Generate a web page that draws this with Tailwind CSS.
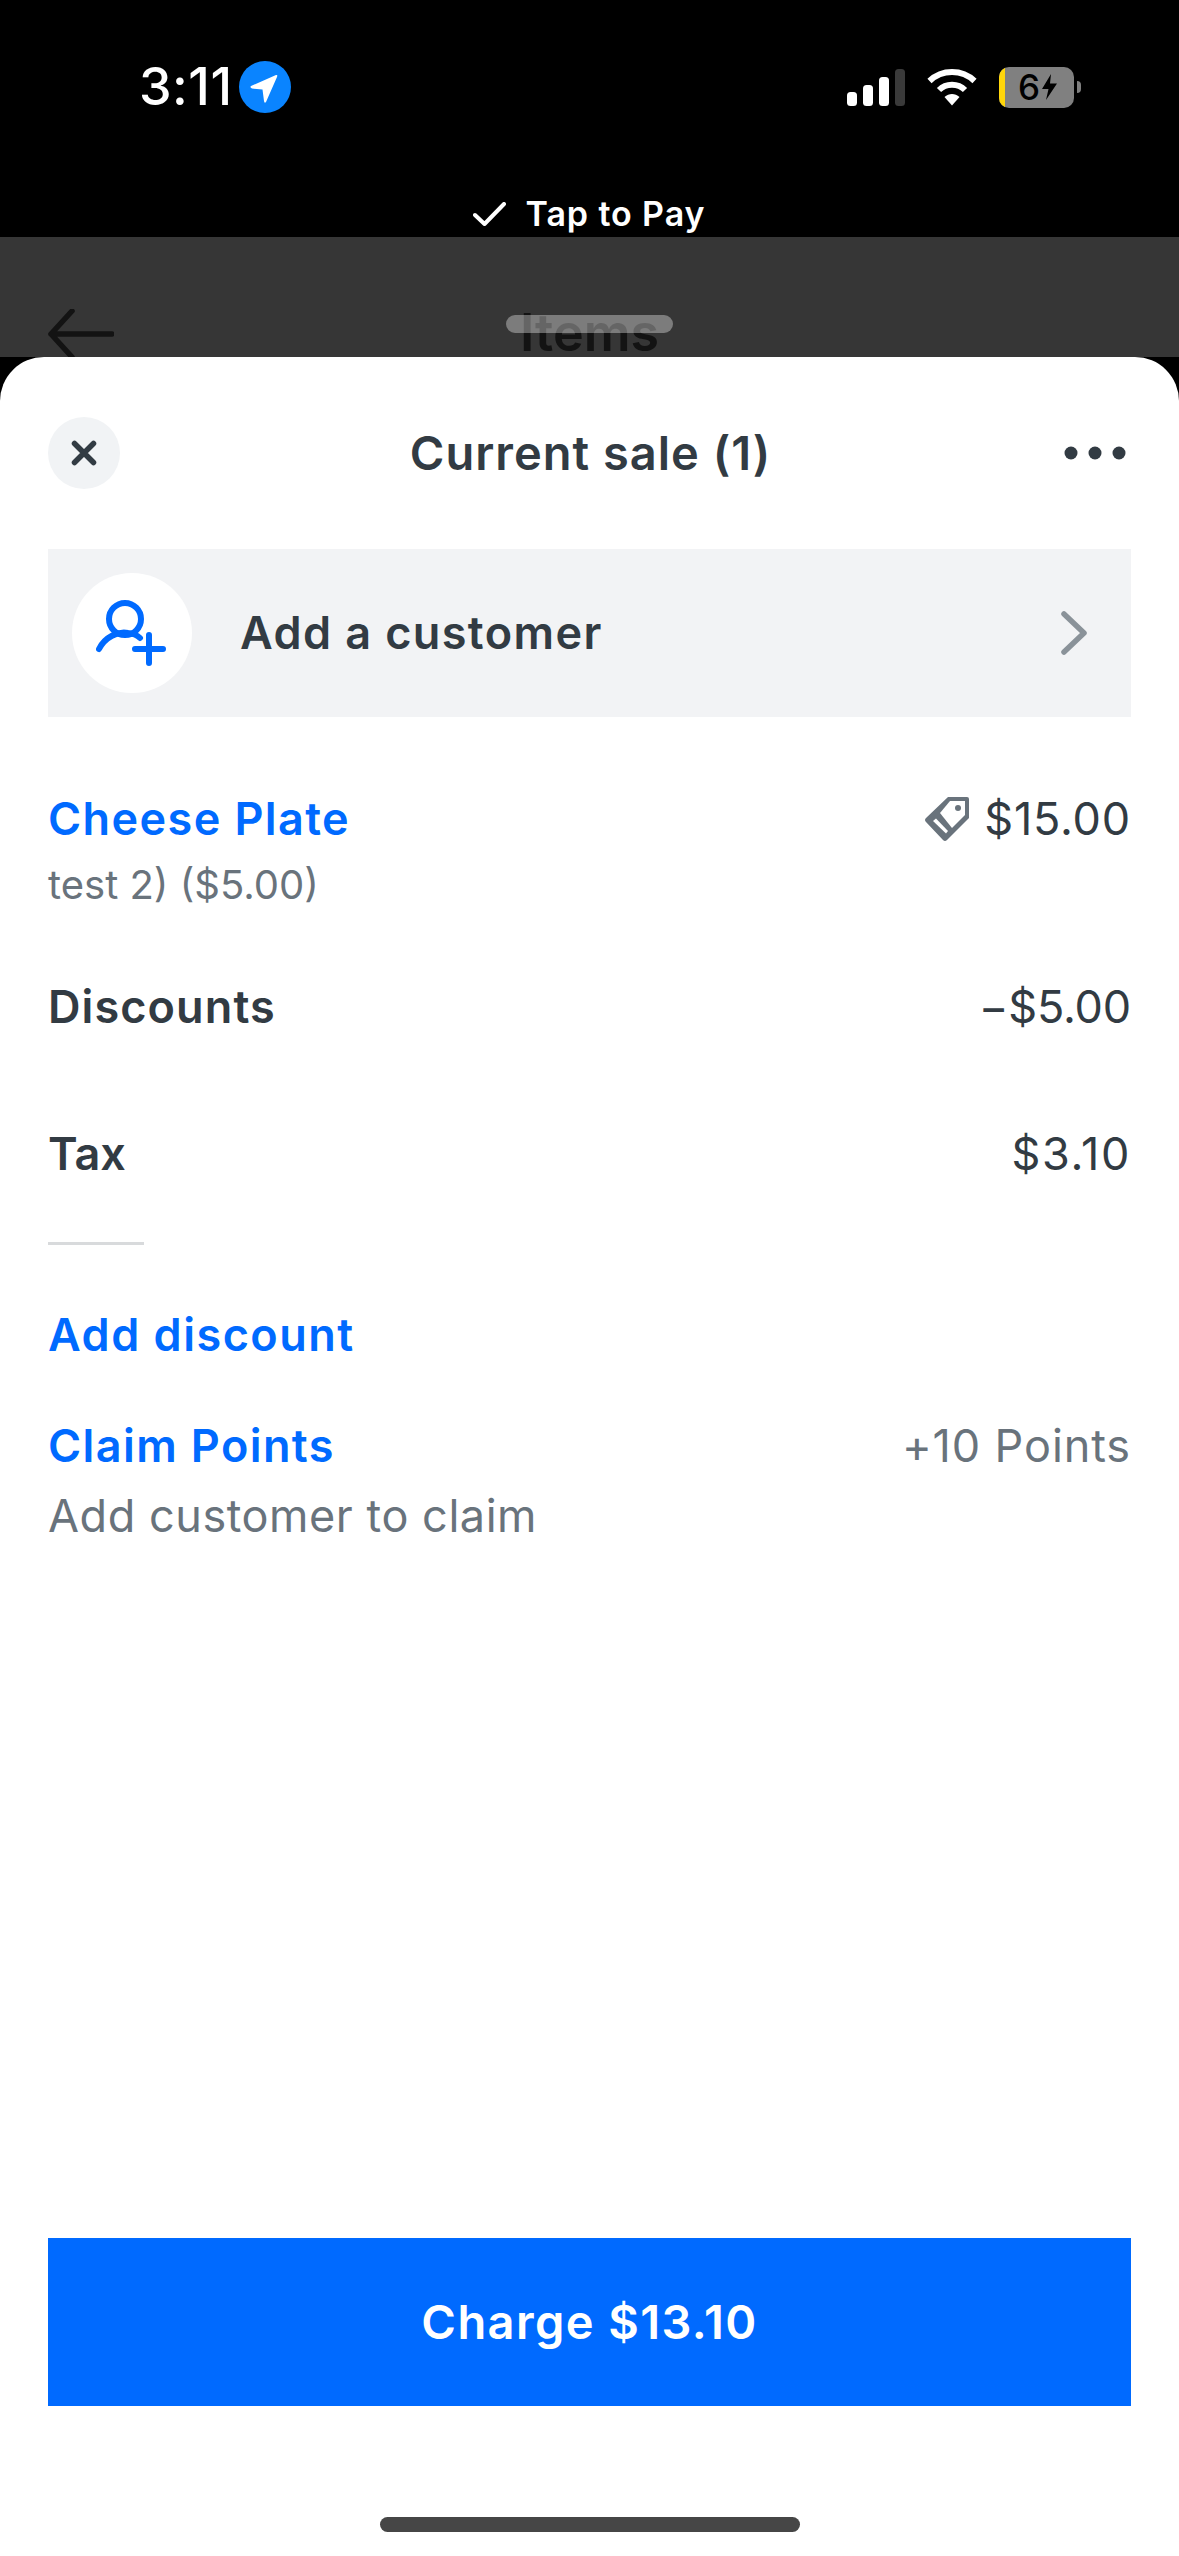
<!DOCTYPE html>
<html>
<head>
<meta charset="utf-8">
<script src="https://cdn.jsdelivr.net/npm/@tailwindcss/browser@4"></script>
</head>
<body class="m-0 bg-black">
<div class="relative w-[1179px] h-[2556px] overflow-hidden bg-black flex flex-col font-['Inter','Liberation_Sans',sans-serif]">
  <!-- status bar -->
  <div class="h-[237px] shrink-0 bg-black relative">
    <div class="flex items-center justify-between pl-[139px] pr-[98px] pt-[62px] h-[112px]">
      <div class="flex items-center gap-[6px]">
        <span class="text-white text-[52px] leading-[50px] font-medium tracking-[0.5px]">3:11</span>
        <svg width="52" height="52" viewBox="0 0 52 52"><circle cx="26" cy="26" r="26" fill="#0a84ff"/><path d="M12 25 L37 14 Q39 13.500 38 16 L27 41 Q25.500 43 25 40 L23.500 28.500 L13 27.500 Q10.500 26.500 12 25Z" fill="#fff"/></svg>
      </div>
      <div class="flex items-center gap-[22px]">
        <svg width="58" height="37" viewBox="0 0 58 37"><rect x="0" y="23" width="10" height="14" rx="3.500" fill="#fff"/><rect x="16" y="16" width="10" height="21" rx="3.500" fill="#fff"/><rect x="32" y="8" width="10" height="29" rx="3.500" fill="#fff"/><rect x="48" y="0" width="10" height="37" rx="3.500" fill="#3a3a3a"/></svg>
        <svg width="50" height="37" viewBox="0 0 50 37"><path d="M2.500 12 C15 0 35 0 47.500 12" fill="none" stroke="#fff" stroke-width="6"/><path d="M12 21 C19 14 31 14 38 21" fill="none" stroke="#fff" stroke-width="6"/><path d="M17.500 28 C22 24 28 24 32.500 28 L25 36.500 Z" fill="#fff"/></svg>
        <div class="flex items-center gap-[3px]">
          <div class="relative w-[75px] h-[41px] rounded-[10px] bg-[#808080] overflow-hidden flex items-center justify-center gap-[1px]">
            <div class="absolute left-0 top-0 bottom-0 w-[6px] bg-[#ffd60a]"></div>
            <span class="text-black text-[35px] leading-[33px] font-medium ml-[3px]">6</span>
            <svg width="17" height="26" viewBox="0 0 17 26"><path d="M10 0 L1 15 L7.500 15 L5 26 L16 9.500 L9 9.500 Z" fill="#000"/></svg>
          </div>
          <div class="w-[4px] h-[12px] rounded-r-[4px] bg-[#808080]"></div>
        </div>
      </div>
    </div>
    <div class="absolute left-0 right-0 top-[196px] flex items-center justify-center gap-[20px] pr-[1px]">
      <svg width="33" height="24" viewBox="0 0 33 24"><path d="M2 13 L11.500 22 L31 2" fill="none" stroke="#fff" stroke-width="4" stroke-linecap="round" stroke-linejoin="round"/></svg>
      <span class="text-white text-[34px] leading-[36px] font-semibold tracking-[0.9px]">Tap to Pay</span>
    </div>
  </div>
  <!-- dimmed nav -->
  <div class="h-[120px] shrink-0 bg-[#363636] relative">
    <svg class="absolute left-[48px] top-[72px]" width="66" height="49" viewBox="0 0 66 49"><path d="M64 25 L3 25 L24 2 M3 25 L24 48" fill="none" stroke="#131313" stroke-width="5.500" stroke-linecap="round" stroke-linejoin="round"/></svg>
    <div class="absolute left-0 right-0 top-[66px] text-center text-[#131313] text-[52px] leading-[60px] font-semibold">Items</div>
    <div class="absolute left-[506px] top-[78px] w-[167px] h-[18px] rounded-full bg-white/35"></div>
  </div>
  <!-- sheet -->
  <div class="relative flex-1 bg-white rounded-t-[44px] px-[48px] flex flex-col text-[#323b43]">
    <div class="flex items-center justify-between h-[72px] mt-[60px]">
      <div class="w-[72px] h-[72px] rounded-full bg-[#f1f3f5] flex items-center justify-center">
        <svg width="26" height="26" viewBox="0 0 26 26"><path d="M3.500 3.500 L22.500 22.500 M22.500 3.500 L3.500 22.500" fill="none" stroke="#323b43" stroke-width="5.500" stroke-linecap="round"/></svg>
      </div>
      <div class="mr-[3px] text-[47px] leading-[56px] font-semibold tracking-[1px]">Current sale (1)</div>
      <svg class="mr-[5px]" width="62" height="14" viewBox="0 0 62 14"><circle cx="7" cy="7" r="6.500" fill="#323b43"/><circle cx="31" cy="7" r="6.500" fill="#323b43"/><circle cx="55" cy="7" r="6.500" fill="#323b43"/></svg>
    </div>
    <div class="mt-[60px] h-[168px] w-[1083px] bg-[#f2f3f5] flex items-center pl-[24px] pr-[44px]">
      <div class="w-[120px] h-[120px] rounded-full bg-white flex items-center justify-center">
        <svg width="72" height="68" viewBox="0 0 72 68"><circle cx="29" cy="20" r="16" fill="none" stroke="#006aff" stroke-width="6"/><path d="M3 50 C9 38 22 32 32 34 C37 34.500 41 36 44 39" fill="none" stroke="#006aff" stroke-width="6" stroke-linecap="round"/><path d="M53 36 L53 64 M39 50 L67 50" fill="none" stroke="#006aff" stroke-width="6" stroke-linecap="round"/></svg>
      </div>
      <div class="ml-[48px] flex-1 text-[45px] leading-[56px] font-semibold tracking-[1.4px]">Add a customer</div>
      <svg width="26" height="44" viewBox="0 0 26 44"><path d="M3 3 L23 22 L3 41" fill="none" stroke="#8a9299" stroke-width="5.500" stroke-linecap="round" stroke-linejoin="round"/></svg>
    </div>
    <div class="mt-[74px] flex items-center justify-between">
      <div class="text-[#006aff] text-[45px] leading-[56px] font-semibold tracking-[1.4px]">Cheese Plate</div>
      <div class="flex items-center gap-[14px]">
        <svg width="45" height="46" viewBox="0 0 45 46"><path d="M23 1 L42 1 Q44 1 44 3 L44 22 L22 44 Q20 46 18 44 L1 26 Q-1 24 1 22 Z" fill="#69737c"/><path d="M25 5 L40 5 L40 19 L27 32 L15 17 Z" fill="#fff"/><circle cx="33" cy="12" r="3" fill="#69737c"/><path d="M8 25 L11 22.500 L23 35 L21 37.500 Z" fill="#fff"/></svg>
        <span class="text-[45px] leading-[56px] tracking-[0.8px]">$15.00</span>
      </div>
    </div>
    <div class="mt-[13px] text-[#69737c] text-[40px] leading-[50px]">test 2) ($5.00)</div>
    <div class="mt-[69px] flex items-center justify-between">
      <div class="text-[45px] leading-[56px] font-semibold tracking-[1.1px]">Discounts</div>
      <div class="text-[45px] leading-[56px] tracking-[-0.2px]">−$5.00</div>
    </div>
    <div class="mt-[91px] flex items-center justify-between">
      <div class="text-[45px] leading-[56px] font-semibold">Tax</div>
      <div class="text-[45px] leading-[56px] tracking-[1.6px]">$3.10</div>
    </div>
    <div class="mt-[60px] w-[96px] h-[3px] bg-[#d8dadc]"></div>
    <div class="mt-[62px] text-[#006aff] text-[45px] leading-[56px] font-semibold tracking-[1.5px]">Add discount</div>
    <div class="mt-[55px] flex items-center justify-between">
      <div class="text-[#006aff] text-[45px] leading-[56px] font-semibold tracking-[1.4px]">Claim Points</div>
      <div class="text-[#69737c] text-[45px] leading-[56px] tracking-[0.9px]">+10 Points</div>
    </div>
    <div class="mt-[14px] text-[#69737c] text-[45px] leading-[56px] tracking-[0.55px]">Add customer to claim</div>
    <div class="flex-1"></div>
    <div class="mb-[150px] h-[168px] w-[1083px] bg-[#006aff] flex items-center justify-center text-white text-[47px] font-semibold tracking-[1.4px]">Charge $13.10</div>
    <div class="absolute left-[380px] top-[2160px] w-[420px] h-[15px] rounded-full bg-[#464646]"></div>
  </div>
</div>
</body>
</html>
